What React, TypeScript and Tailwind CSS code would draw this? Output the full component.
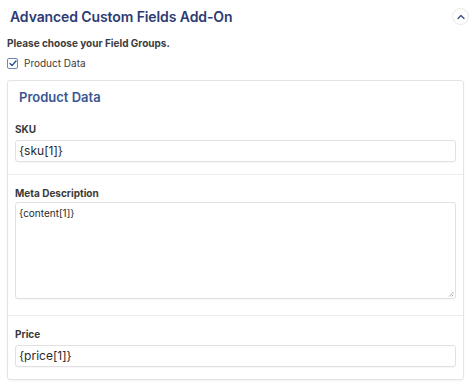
import React from 'react';

const Field = ({ label, value, last }: { label: string; value: string; last?: boolean }) => (
  <div className={`px-[7px] pt-[12px] pb-[12px] ${last ? '' : 'border-b border-[#ececec]'}`}>
    <label className="block text-[10px] leading-[12px] font-bold text-[#3a3a3a] mb-[5px]">{label}</label>
    <div className="h-[22px] w-full rounded-[3px] border border-[#e1e1e1] bg-white px-[3px] flex items-center text-[12px] text-[#2a2a2a] shadow-[0_1px_1px_rgba(0,0,0,0.03)]">
      {value}
    </div>
  </div>
);

export default function App() {
  return (
    <div className="w-[474px] h-[386px] bg-white font-['Inter',sans-serif] overflow-hidden">
      {/* header */}
      <div className="h-[32px] flex items-center justify-between pl-[10px] pr-[5px]">
        <h2 className="text-[14px] font-semibold text-[#2d3b74] tracking-[-0.1px]">Advanced Custom Fields Add-On</h2>
        <button className="w-[17px] h-[17px] mt-[1px] rounded-full border border-[#e8e8e8] flex items-center justify-center text-[#3b4a7a]">
          <svg width="8" height="6" viewBox="0 0 8 6" fill="none">
            <path d="M1 4.5 L4 1.5 L7 4.5" stroke="currentColor" strokeWidth="1.3" strokeLinecap="round" strokeLinejoin="round" />
          </svg>
        </button>
      </div>

      <p className="pl-[7px] mt-[5px] text-[10px] leading-[12px] font-bold text-[#3c3c3c]">Please choose your Field Groups.</p>

      <label className="pl-[7px] mt-[7px] flex items-center gap-[6px] text-[10px] text-[#3c3c3c]">
        <span className="w-[11px] h-[11px] rounded-[2px] border border-[#6c86b8] flex items-center justify-center bg-white">
          <svg width="8" height="7" viewBox="0 0 8 7" fill="none">
            <path d="M1 3.6 L3 5.6 L7 1" stroke="#2d4f93" strokeWidth="1.4" strokeLinecap="round" strokeLinejoin="round" />
          </svg>
        </span>
        Product Data
      </label>

      {/* group card */}
      <div className="ml-[7px] mr-[10px] mt-[9px] border border-[#e4e4e4] rounded-[3px] shadow-[0_1px_2px_rgba(0,0,0,0.05)]">
        <div className="px-[7px] pt-[8px] pb-[12px] border-b border-[#ececec]">
          <h3 className="pl-[4px] text-[13px] leading-[16px] font-semibold text-[#3a5794] mb-[18px]">Product Data</h3>
          <label className="block text-[10px] leading-[12px] font-bold text-[#3a3a3a] mb-[5px]">SKU</label>
          <div className="h-[22px] w-full rounded-[3px] border border-[#e1e1e1] bg-white px-[3px] flex items-center text-[12px] text-[#2a2a2a] shadow-[0_1px_1px_rgba(0,0,0,0.03)]">
            {'{sku[1]}'}
          </div>
        </div>

        <div className="px-[7px] pt-[12px] pb-[16px] border-b border-[#ececec]">
          <label className="block text-[10px] leading-[12px] font-bold text-[#3a3a3a] mb-[3px]">Meta Description</label>
          <div className="relative h-[97px] w-full rounded-[3px] border border-[#e1e1e1] bg-white px-[3px] pt-[3px] text-[10px] text-[#2a2a2a] shadow-[0_1px_1px_rgba(0,0,0,0.03)]">
            {'{content[1]}'}
            <svg className="absolute right-[1px] bottom-[1px]" width="6" height="6" viewBox="0 0 6 6">
              <path d="M5.5 1 L1 5.5 M5.5 3.5 L3.5 5.5" stroke="#9a9a9a" strokeWidth="0.8" />
            </svg>
          </div>
        </div>

        <Field label="Price" value="{price[1]}" last />
      </div>
    </div>
  );
}
